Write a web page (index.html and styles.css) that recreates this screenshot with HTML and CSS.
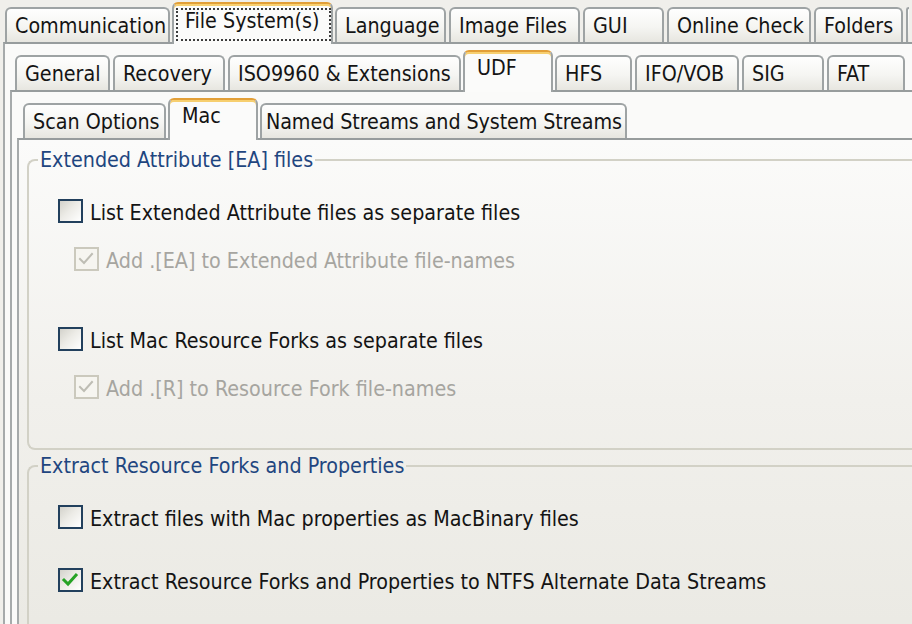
FILE: index.html
```html
<!DOCTYPE html>
<html lang="en">
<head>
  <meta charset="UTF-8">
  <title>Settings - File System(s)</title>
  <link rel="stylesheet" href="styles.css">
</head>
<body>
  <div class="dialog">
    <!-- top level tabs -->
    <div class="tabstrip top">
      <div class="tab w-comm">Communication</div>
      <div class="tab sel w-fs"><span class="focus">File System(s)</span></div>
      <div class="tab w-lang">Language</div>
      <div class="tab w-img">Image Files</div>
      <div class="tab w-gui">GUI</div>
      <div class="tab w-online">Online Check</div>
      <div class="tab w-folders">Folders</div>
      <div class="tab w-more"></div>
    </div>
    <div class="pane outer">
      <!-- file system tabs -->
      <div class="tabstrip mid">
        <div class="tab w-general">General</div>
        <div class="tab w-recovery">Recovery</div>
        <div class="tab w-iso">ISO9960 &amp; Extensions</div>
        <div class="tab sel w-udf">UDF</div>
        <div class="tab w-hfs">HFS</div>
        <div class="tab w-ifo">IFO/VOB</div>
        <div class="tab w-sig">SIG</div>
        <div class="tab w-fat">FAT</div>
      </div>
      <div class="pane middle">
        <!-- UDF tabs -->
        <div class="tabstrip inner">
          <div class="tab w-scan">Scan Options</div>
          <div class="tab sel w-mac">Mac</div>
          <div class="tab w-named">Named Streams and System Streams</div>
        </div>
        <div class="pane content">
          <fieldset class="group g1">
            <legend>Extended Attribute [EA] files</legend>
            <div class="opt first">
              <span class="cb"></span>
              <span class="label">List Extended Attribute files as separate files</span>
            </div>
            <div class="opt sub">
              <span class="cb dis">
                <svg viewBox="0 0 21 20"><path d="M4 10 L8 14 L16 5"/></svg>
              </span>
              <span class="label">Add .[EA] to Extended Attribute file-names</span>
            </div>
            <div class="opt spaced">
              <span class="cb"></span>
              <span class="label">List Mac Resource Forks as separate files</span>
            </div>
            <div class="opt sub">
              <span class="cb dis">
                <svg viewBox="0 0 21 20"><path d="M4 10 L8 14 L16 5"/></svg>
              </span>
              <span class="label">Add .[R] to Resource Fork file-names</span>
            </div>
          </fieldset>
          <fieldset class="group g2">
            <legend>Extract Resource Forks and Properties</legend>
            <div class="opt first">
              <span class="cb"></span>
              <span class="label">Extract files with Mac properties as MacBinary files</span>
            </div>
            <div class="opt last">
              <span class="cb on">
                <svg viewBox="0 0 21 20"><path d="M4 10 L8 14 L16 5"/></svg>
              </span>
              <span class="label">Extract Resource Forks and Properties to NTFS Alternate Data Streams</span>
            </div>
          </fieldset>
        </div>
      </div>
    </div>
  </div>
</body>
</html>
```

FILE: styles.css
```css
/* page */
* { box-sizing: border-box; }
body {
  margin: 0;
  width: 912px;
  height: 624px;
  overflow: hidden;
  background: #f0efeb;
  font-family: "DejaVu Sans Condensed", "DejaVu Sans", sans-serif;
  font-stretch: condensed;
  font-size: 21.3px;
  color: #141414;
}
.dialog {
  width: 912px;
  height: 624px;
  padding-left: 3px;
  overflow: hidden;
}

/* tab strips */
.tabstrip {
  display: flex;
  align-items: flex-end;
  position: relative;
  z-index: 1;
}
.tabstrip.top { padding: 2px 0 0 2px; }
.tabstrip.mid { padding: 6px 0 0 5px; }
.tabstrip.inner { padding: 6px 0 0 6px; }

.tab {
  flex: none;
  height: 35px;
  margin-right: 3px;
  padding: 5px 0 0 8px;
  border: 2px solid #9ea3a4;
  border-bottom: none;
  border-radius: 6px 6px 0 0;
  background: linear-gradient(#fefefe, #f5f5f2 55%, #e7e6e0);
  line-height: 24px;
  white-space: nowrap;
  overflow: hidden;
}
.tab.sel {
  height: 42px;
  margin: 0 2px -2px -1px;
  padding: 4px 0 0 12px;
  border-top-color: #e29f38;
  background: #fbfbfa;
  box-shadow: inset 0 2px 0 #f7cf6f;
}
.tab.sel .focus {
  display: block;
  height: 33px;
  margin: 4px 0 0 2px;
  padding-left: 7px;
  border: 2px dotted #3c3c3c;
  line-height: 22px;
}
.tab.w-fs { padding: 0; }

/* tab widths, row 1 */
.w-comm { width: 165px; }
.w-fs { width: 161px; }
.w-lang { width: 111px; }
.w-img { width: 131px; }
.w-gui { width: 81px; }
.w-online { width: 144px; }
.w-folders { width: 89px; }
.tab.w-more {
  width: 3px;
  margin-right: 0;
  border-right: none;
  border-top-right-radius: 0;
  padding: 0;
}

/* row 2 */
.w-general { width: 95px; }
.w-recovery { width: 112px; }
.w-iso { width: 233px; }
.w-udf { width: 90px; }
.w-hfs { width: 77px; }
.w-ifo { width: 104px; }
.w-sig { width: 82px; }
.w-fat { width: 78px; }

/* row 3 */
.w-scan { width: 143px; }
.w-mac { width: 90px; }
.tab.w-named {
  width: 367px;
  padding-left: 4px;
  letter-spacing: -0.1px;
}

/* panes run on past the right and bottom edge */
.pane {
  border-top: 2px solid #979c9d;
  border-left: 2px solid #a6aaab;
}
.pane.outer {
  padding-left: 5px;
  background: #fafaf9;
}
.pane.middle {
  padding-left: 5px;
  background: #fafaf9;
}
.pane.content {
  height: 486px;
  padding: 8px 0 0 8px;
  overflow: hidden;
  background: linear-gradient(#fbfbfa, #f1f0ec 260px, #ebeae4 480px);
}

/* group boxes */
.group {
  margin: 0;
  padding: 0 0 49px 9px;
  min-width: 0;
  border: 2px solid #d2d1c6;
  border-right: none;
  border-radius: 8px 0 0 8px;
}
.group.g2 {
  margin-top: 4px;
  padding-bottom: 60px;
  border-bottom: none;
  border-radius: 8px 0 0 0;
}
.group legend {
  padding: 0 2px;
  line-height: 24px;
  color: #1f4680;
}

/* check rows */
.opt {
  display: flex;
  gap: 7px;
  height: 24px;
  margin: 24px 0 0 20px;
}
.opt.first { margin-top: 27px; }
.opt.spaced { margin-top: 56px; }
.opt.last { margin-top: 39px; }
.opt.sub {
  margin-left: 36px;
  color: #a6a5a0;
}
.opt .label {
  margin-top: 2px;
  line-height: 24px;
  white-space: nowrap;
}

.cb {
  flex: none;
  width: 25px;
  height: 24px;
  border: 2px solid #22405d;
  background: linear-gradient(135deg, #d3d2cb, #ecebe6 45%, #fff);
}
.cb svg {
  display: block;
  width: 21px;
  height: 20px;
  fill: none;
  stroke-linecap: square;
}
.cb.dis {
  border-color: #cbc9bd;
  background: #f6f5f0;
}
.cb.dis svg path {
  stroke: #bebdb4;
  stroke-width: 2;
}
.cb.on svg path {
  stroke: #26a326;
  stroke-width: 3;
}
```
